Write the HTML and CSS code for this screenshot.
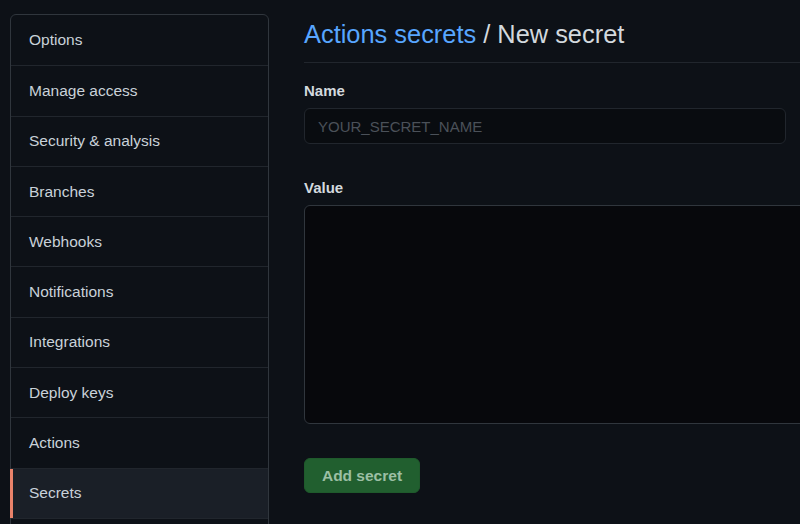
FILE: index.html
```html
<!DOCTYPE html>
<html lang="en">
<head>
<meta charset="utf-8">
<title>Actions secrets / New secret</title>
<link rel="stylesheet" href="styles.css">
</head>
<body>
<div class="layout">
  <nav class="menu">
    <a class="menu-item">Options</a>
    <a class="menu-item">Manage access</a>
    <a class="menu-item">Security &amp; analysis</a>
    <a class="menu-item">Branches</a>
    <a class="menu-item">Webhooks</a>
    <a class="menu-item">Notifications</a>
    <a class="menu-item">Integrations</a>
    <a class="menu-item">Deploy keys</a>
    <a class="menu-item">Actions</a>
    <a class="menu-item selected">Secrets</a>
    <span class="menu-item menu-rest" aria-hidden="true"></span>
  </nav>
  <main class="content">
    <h2 class="subhead"><a class="crumb">Actions secrets</a> / New secret</h2>
    <form class="form">
      <div class="field">
        <label class="label">Name</label>
        <input class="input" type="text" placeholder="YOUR_SECRET_NAME">
      </div>
      <div class="field field-value">
        <label class="label">Value</label>
        <textarea class="textarea"></textarea>
      </div>
      <button class="btn" type="button" disabled>Add secret</button>
    </form>
  </main>
</div>
</body>
</html>
```

FILE: styles.css
```css
html, body {
  margin: 0;
  padding: 0;
  background: #0d1117;
  overflow: hidden;
  height: 524px;
}
body {
  font-family: "Liberation Sans", Arial, sans-serif;
  color: #c9d1d9;
}
.layout {
  display: flex;
  align-items: flex-start;
  padding: 14px 0 0 10px;
  height: 510px;
  overflow: hidden;
}
.menu {
  flex: 0 0 259px;
  box-sizing: border-box;
  border: 1px solid #30363d;
  border-radius: 6px;
  background: #0d1117;
  display: flex;
  flex-direction: column;
}
.menu-item {
  position: relative;
  box-sizing: border-box;
  height: 50.3px;
  display: flex;
  align-items: center;
  padding-left: 18px;
  font-size: 15.5px;
  color: #c9d1d9;
  text-decoration: none;
}
.menu-item + .menu-item {
  border-top: 1px solid #21262d;
}
.menu-item.selected {
  background: #1a1f27;
}
.menu-item.selected::before {
  content: "";
  position: absolute;
  left: -1px;
  top: 0;
  bottom: 0;
  width: 3px;
  background: #e9826a;
}
.content {
  flex: 1 0 auto;
  margin-left: 35px;
  min-width: 520px;
}
.subhead {
  margin: 0;
  height: 49px;
  box-sizing: border-box;
  padding-top: 4px;
  font-size: 25.4px;
  font-weight: 400;
  color: #d3d9de;
  border-bottom: 1px solid #21262d;
  line-height: 32px;
}
.crumb {
  color: #58a6ff;
  text-decoration: none;
}
.form {
  display: flex;
  flex-direction: column;
  align-items: flex-start;
  padding-top: 18px;
}
.field {
  display: flex;
  flex-direction: column;
}
.label {
  font-size: 15px;
  font-weight: 700;
  color: #d3d9de;
  line-height: 20px;
  margin-bottom: 7px;
}
.input {
  box-sizing: border-box;
  width: 482px;
  height: 36px;
  padding: 0 13px;
  background: #090c10;
  border: 1px solid #21262d;
  border-radius: 6px;
  font-family: inherit;
  font-size: 15px;
  color: #c9d1d9;
  outline: none;
}
.input::placeholder {
  color: #4b5159;
}
.field-value {
  margin-top: 34px;
}
.textarea {
  box-sizing: border-box;
  width: 540px;
  height: 219px;
  background: #07080c;
  border: 1px solid #30363d;
  border-radius: 6px;
  resize: none;
  outline: none;
}
.btn {
  margin-top: 34px;
  box-sizing: border-box;
  width: 116px;
  height: 35px;
  border: 1px solid #1f5a2c;
  border-radius: 6px;
  background: #215f2f;
  color: #9cbfa4;
  font-family: inherit;
  font-size: 15.5px;
  font-weight: 600;
  padding: 0;
}
```
